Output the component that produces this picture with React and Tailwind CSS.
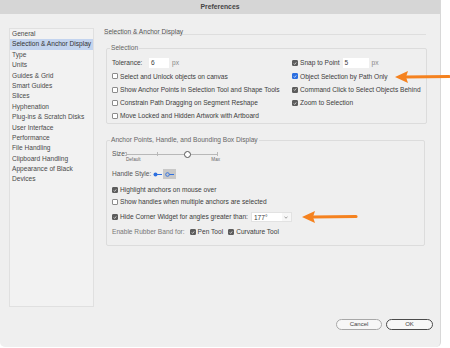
import React from "react";

const font = { fontFamily: '"Liberation Sans", Arial, sans-serif' };

const Check = ({ checked, blue }) => (
  <span
    className={`inline-flex shrink-0 items-center justify-center w-[6px] h-[6px] rounded-[1px] border ${
      blue
        ? "bg-[#2c6fe0] border-[#2c6fe0]"
        : checked
        ? "bg-[#5c5c5c] border-[#5c5c5c]"
        : "bg-white border-[#8c8c8c]"
    }`}
  >
    {(checked || blue) && (
      <svg width="5" height="5" viewBox="0 0 5 5">
        <path d="M1 2.6 L2 3.6 L4 1.2" stroke="#fff" strokeWidth="0.9" fill="none" />
      </svg>
    )}
  </span>
);

const Row = ({ checked, blue, children, className = "" }) => (
  <div className={`flex items-center gap-[2px] ${className}`}>
    <Check checked={checked} blue={blue} />
    <span>{children}</span>
  </div>
);

const sideItems = [
  "General",
  "Selection & Anchor Display",
  "Type",
  "Units",
  "Guides & Grid",
  "Smart Guides",
  "Slices",
  "Hyphenation",
  "Plug-ins & Scratch Disks",
  "User Interface",
  "Performance",
  "File Handling",
  "Clipboard Handling",
  "Appearance of Black",
  "Devices",
];

const Arrow = ({ className }) => (
  <svg className={className} width="56" height="14" viewBox="0 0 56 14">
    <path d="M10 7 L54 6.5" stroke="#f5821f" strokeWidth="3.2" strokeLinecap="round" />
    <path d="M0 7 L13 1 L11 7 L13 13 Z" fill="#f5821f" />
  </svg>
);

export default function App() {
  return (
    <div className="relative w-[450px] h-[348px] bg-white overflow-hidden whitespace-nowrap" style={font}>
      <div className="w-[441px] h-[347px] bg-[#efefef] rounded-b-[5px] border-r border-[#d8d8d8] flex flex-col text-[6.6px] text-[#3c3c3c]">
        {/* title bar */}
        <div className="h-[14px] bg-[#d6d6d6] flex items-center justify-center font-bold text-[6.8px] text-[#444]">
          Preferences
        </div>

        <div className="flex h-[293px]">
          {/* sidebar */}
          <div className="mt-[14px] ml-[9px] w-[85px] h-[279px] bg-[#f2f2f2] border border-[#e0e0e0]">
            {sideItems.map((s, i) => (
              <div
                key={s}
                className={`h-[10.4px] leading-[10.4px] pl-[2px] ${
                  i === 1 ? "bg-[#c3d4ef] text-[#333]" : "text-[#4a4a4a]"
                }`}
              >
                {s}
              </div>
            ))}
          </div>

          {/* main */}
          <div className="ml-[10px] w-[322px]">
            <div className="mt-[14px] h-[7px] leading-[7px] border-b border-[#dedede] text-[#555]">
              Selection &amp; Anchor Display
            </div>

            <fieldset className="mt-[9px] ml-[2px] w-[320px] h-[80px] border border-[#dcdcdc] rounded-[2px] px-[5px]">
              <legend className="ml-[-2px] px-[1px] h-[8px] leading-[8px] text-[#666]">Selection</legend>
              <div className="grid grid-cols-[180px_1fr] mt-[4.5px]">
                <div className="flex flex-col">
                  <div className="h-[13.3px] flex items-center">
                    <span className="w-[37px] shrink-0">Tolerance:</span>
                    <span className="w-[20px] h-[10px] bg-white pl-[2px] leading-[10px]">6</span>
                    <span className="ml-[3px] text-[#888]">px</span>
                  </div>
                  <Row className="h-[13.3px]">Select and Unlock objects on canvas</Row>
                  <Row className="h-[13.3px]">Show Anchor Points in Selection Tool and Shape Tools</Row>
                  <Row className="h-[13.3px]">Constrain Path Dragging on Segment Reshape</Row>
                  <Row className="h-[13.3px]">Move Locked and Hidden Artwork with Artboard</Row>
                </div>
                <div className="flex flex-col">
                  <div className="h-[13.3px] flex items-center gap-[2px]">
                    <Check checked />
                    <span className="mr-[1px]">Snap to Point</span>
                    <span className="w-[26px] h-[10px] bg-white pl-[2px] leading-[10px]">5</span>
                    <span className="ml-[1px] text-[#888]">px</span>
                  </div>
                  <Row className="h-[13.3px]" blue>Object Selection by Path Only</Row>
                  <Row className="h-[13.3px]" checked>Command Click to Select Objects Behind</Row>
                  <Row className="h-[13.3px]" checked>Zoom to Selection</Row>
                </div>
              </div>
            </fieldset>

            <fieldset className="mt-[12px] ml-[2px] w-[319px] h-[110px] border border-[#dcdcdc] rounded-[2px] px-[5px]">
              <legend className="ml-[-2px] px-[1px] h-[8px] leading-[8px] text-[#666]">
                Anchor Points, Handle, and Bounding Box Display
              </legend>
              <div className="flex flex-col">
                <div className="h-[20px] flex items-center">
                  <span className="w-[14px] shrink-0 text-[#555]">Size:</span>
                  <div className="relative w-[92px] h-[20px]">
                    <div className="absolute left-0 right-0 top-[10px] h-px bg-[#b8b8b8]" />
                    <div className="absolute left-0 top-[8px] w-px h-[4px] bg-[#b8b8b8]" />
                    <div className="absolute left-[31px] top-[8px] w-px h-[4px] bg-[#b8b8b8]" />
                    <div className="absolute right-0 top-[8px] w-px h-[4px] bg-[#b8b8b8]" />
                    <div className="absolute left-[58px] top-[7px] w-[7px] h-[7px] rounded-full bg-white border border-[#555]" />
                    <span className="absolute left-0 top-[13px] text-[4.6px] leading-[5px] text-[#666]">Default</span>
                    <span className="absolute right-[-2px] top-[13px] text-[4.6px] leading-[5px] text-[#666]">Max</span>
                  </div>
                </div>
                <div className="h-[20px] flex items-center">
                  <span className="w-[39px] shrink-0 text-[#555]">Handle Style:</span>
                  <span className="w-[12px] h-[10px] flex items-center justify-center">
                    <svg width="9" height="5" viewBox="0 0 9 5">
                      <circle cx="2.5" cy="2.5" r="2" fill="#2c6fe0" />
                      <path d="M4 2.5 H9" stroke="#2c6fe0" strokeWidth="1" />
                    </svg>
                  </span>
                  <span className="w-[13px] h-[10px] bg-[#c8c8c8] flex items-center justify-center">
                    <svg width="9" height="5" viewBox="0 0 9 5">
                      <circle cx="2.5" cy="2.5" r="1.8" fill="none" stroke="#2c6fe0" strokeWidth="0.9" />
                      <path d="M4.3 2.5 H9" stroke="#2c6fe0" strokeWidth="1" />
                    </svg>
                  </span>
                </div>
                <Row className="h-[12px]" checked>Highlight anchors on mouse over</Row>
                <Row className="h-[12px]">Show handles when multiple anchors are selected</Row>
                <div className="h-[18px] flex items-center gap-[2px]">
                  <Check checked />
                  <span>Hide Corner Widget for angles greater than:</span>
                  <span className="ml-[1px] flex h-[10px] border border-[#e2e2e2]">
                    <span className="w-[30px] bg-white pl-[2px] leading-[9px]">177°</span>
                    <span className="w-[9px] bg-[#f7f7f7] flex items-center justify-center">
                      <svg width="4" height="3" viewBox="0 0 4 3">
                        <path d="M0.5 0.8 L2 2.2 L3.5 0.8" stroke="#777" strokeWidth="0.7" fill="none" />
                      </svg>
                    </span>
                  </span>
                </div>
                <div className="h-[12px] flex items-center gap-[2px]">
                  <span className="text-[#777] mr-[3px]">Enable Rubber Band for:</span>
                  <Check checked />
                  <span className="mr-[3px]">Pen Tool</span>
                  <Check checked />
                  <span>Curvature Tool</span>
                </div>
              </div>
            </fieldset>
          </div>
        </div>

        {/* footer */}
        <div className="mt-[12px] flex justify-end gap-[4px] pr-[7px]">
          <button className="w-[46px] h-[11px] rounded-full border border-[#a8a8a8] bg-[#f7f7f7] text-[6px] leading-[9px] text-[#444]">
            Cancel
          </button>
          <button className="w-[47px] h-[11px] rounded-full border border-[#4a4a4a] bg-[#f7f7f7] text-[6px] leading-[9px] text-[#444]">
            OK
          </button>
        </div>
      </div>

      <Arrow className="absolute left-[395px] top-[70px]" />
      <Arrow className="absolute left-[302px] top-[210px]" />
    </div>
  );
}
